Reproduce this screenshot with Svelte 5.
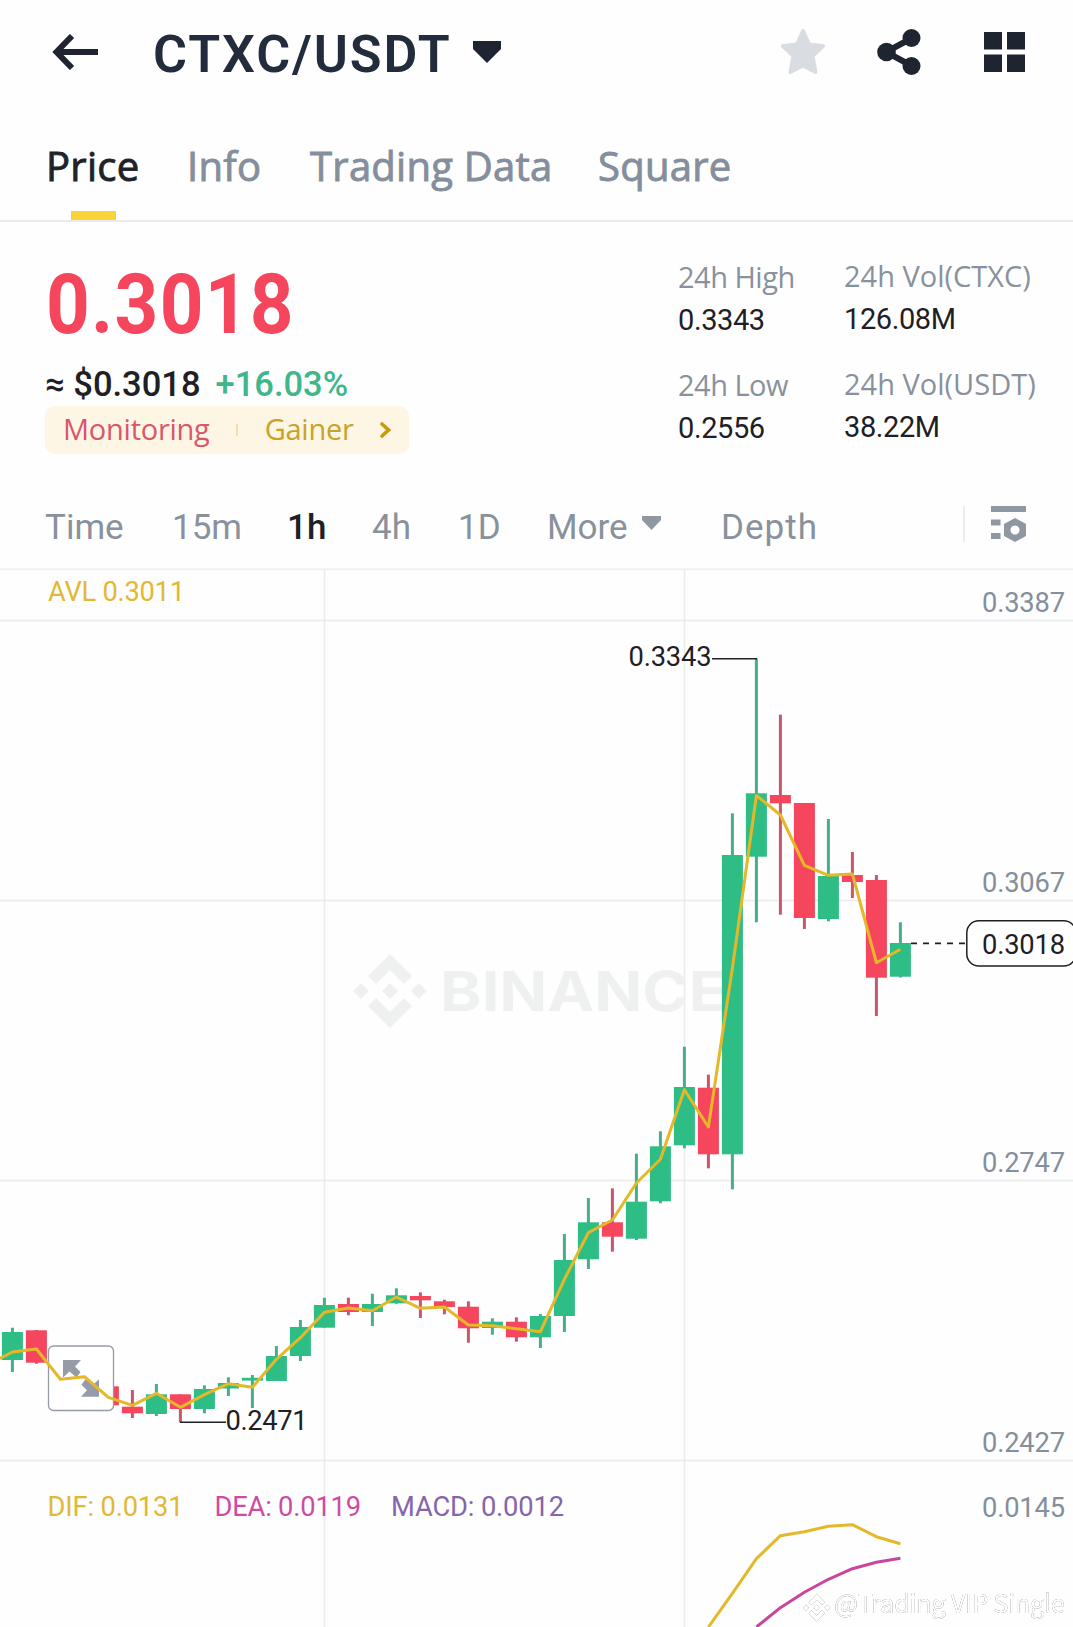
<script>
	const tabs = ["Price", "Info", "Trading Data", "Square"];
	let activeTab = $state("Price");

	const intervals = ["Time", "15m", "1h", "4h", "1D"];
	let activeInterval = $state("1h");

	const stats = [
		{ label: "24h High", value: "0.3343" },
		{ label: "24h Vol(CTXC)", value: "126.08M" },
		{ label: "24h Low", value: "0.2556" },
		{ label: "24h Vol(USDT)", value: "38.22M" }
	];

	// Candle geometry: [high, body top, body bottom, low, up]
	const candles = [
		[1327.7, 1332, 1360, 1372, 1],
		[1330, 1330.3, 1362.7, 1363.7, 0],
		[1358, 1362, 1378, 1382, 0],
		[1368, 1372, 1382, 1388, 1],
		[1386.3, 1386.3, 1405.3, 1405.3, 0],
		[1390, 1406.7, 1413.3, 1418, 0],
		[1384, 1394.3, 1414, 1416, 1],
		[1394.3, 1394.3, 1409, 1422.3, 0],
		[1385.3, 1389, 1409, 1413.3, 1],
		[1377.3, 1383, 1388.5, 1396, 1],
		[1375, 1377.8, 1380.6, 1408, 1],
		[1346, 1356, 1381, 1381, 1],
		[1320, 1327, 1356, 1361, 1],
		[1297.7, 1305, 1327.7, 1327.7, 1],
		[1297.7, 1304, 1312, 1315.3, 0],
		[1293.7, 1304, 1312, 1326, 1],
		[1288.3, 1295.3, 1303.3, 1303.7, 1],
		[1292.3, 1296, 1300.3, 1318, 0],
		[1299.7, 1301.3, 1307, 1314.3, 0],
		[1301.3, 1306.7, 1328.3, 1342.7, 0],
		[1318.3, 1321.7, 1328, 1334.7, 1],
		[1317.3, 1321.7, 1337.3, 1341.7, 0],
		[1314, 1316, 1337.3, 1348, 1],
		[1234, 1260, 1316, 1332, 1],
		[1198, 1222.3, 1259.3, 1269, 1],
		[1188.3, 1222.3, 1236.7, 1251.7, 0],
		[1153.7, 1201.7, 1238.7, 1240, 1],
		[1131.3, 1146.3, 1201.3, 1203.3, 1],
		[1046.7, 1087, 1145.3, 1148.3, 1],
		[1074.7, 1087.7, 1154.3, 1168.3, 0],
		[813.3, 855, 1154.3, 1189.3, 1],
		[658.7, 793.3, 856.7, 922.3, 1],
		[714.7, 795, 803.3, 914.7, 0],
		[803, 803, 918, 929, 0],
		[819, 876, 919, 921.3, 1],
		[852, 875, 882, 898, 0],
		[875, 880, 977.7, 1016, 0],
		[922.3, 943, 976.7, 977.5, 1]
	];

	const avl = [
		1352, 1349, 1379.3, 1376.7, 1397.3, 1405.3, 1393.3, 1407.3, 1394.7, 1383.7,
		1387.3, 1359.3, 1337.7, 1312.2, 1308, 1310.7, 1297, 1308.3, 1307, 1325,
		1325.7, 1328.7, 1331.7, 1279.3, 1232.7, 1220, 1183, 1159.3, 1089.7, 1127,
		968, 795.5, 815, 865.3, 875.3, 874, 962.7, 949.3
	];

	const dif = [1627, 1593.3, 1558.7, 1535.7, 1531.7, 1526.3, 1524.7, 1536.7, 1543.7];
	const dea = [1627, 1607.7, 1592.3, 1579.3, 1568.7, 1562.3, 1558.3];

	const cx = (i) => 12.4 + i * 24;
	const toPoints = (values, start) =>
		values.map((y, i) => `${cx(i + start)},${y}`).join(" ");

	const rows = [620.5, 900.5, 1180.5, 1460.5];
	const columns = [324.5, 684.5];
	const axis = [
		{ y: 611.5, text: "0.3387" },
		{ y: 891.7, text: "0.3067" },
		{ y: 1171.7, text: "0.2747" },
		{ y: 1451.7, text: "0.2427" },
		{ y: 1516.7, text: "0.0145" }
	];
</script>

{#snippet logo()}
	<path d="M37 0 59 22 51 30 37 16 23 30 15 22zM8 29 16 37 8 45 0 37zM37 29 45 37 37 45 29 37zM66 29 74 37 66 45 58 37zM23 44 37 58 51 44 59 52 37 74 15 52z" />
{/snippet}

<div class="screen">
	<header>
		<svg class="back" width="46" height="36" viewBox="0 0 46 36">
			<path d="M46 18H5M20 2 4.500 18 20 34" fill="none" stroke="#1e2530" stroke-width="6" />
		</svg>
		<h1>CTXC/USDT</h1>
		<svg class="pair-caret" width="28" height="22" viewBox="0 0 28 22">
			<path d="M0 0h28v8L14 22 0 8z" fill="#1e2530" />
		</svg>
		<div class="actions">
			<svg width="46" height="48" viewBox="0 0 46 48">
				<path d="M23 3 29 16.500 43 18 32.500 28 35.500 44 23 37.500 10.500 44 13.500 28 3 18 17 16.500z" fill="#d9dce1" stroke="#d9dce1" stroke-width="4" stroke-linejoin="round" />
			</svg>
			<svg width="44" height="48" viewBox="0 0 44 48">
				<path d="M35 10 9 24 35 38" fill="none" stroke="#1e2530" stroke-width="6" />
				<circle cx="9.500" cy="24" r="9.300" fill="#1e2530" />
				<circle cx="34.500" cy="10" r="9" fill="#1e2530" />
				<circle cx="34.500" cy="38" r="9" fill="#1e2530" />
			</svg>
			<svg width="41" height="40" viewBox="0 0 41 40">
				<path d="M0 0h18v17.500H0zM23 0h18v17.500H23zM0 22.500h18V40H0zM23 22.500h18V40H23z" fill="#1e2530" />
			</svg>
		</div>
	</header>

	<nav class="tabs">
		{#each tabs as tab}
			<button class:active={tab === activeTab} onclick={() => (activeTab = tab)}>{tab}</button>
		{/each}
	</nav>

	<section class="summary">
		<div class="quote">
			<div class="price">0.3018</div>
			<div class="sub"><span>≈ $0.3018</span><span class="up">+16.03%</span></div>
			<div class="tags">
				<span class="monitoring">Monitoring</span>
				<i></i>
				<span class="gainer">Gainer</span>
				<svg width="11" height="16" viewBox="0 0 11 16">
					<path d="M2 2 8.500 8 2 14" fill="none" stroke="#c99a10" stroke-width="3.600" stroke-linecap="round" />
				</svg>
			</div>
		</div>
		<dl class="stats">
			{#each stats as stat}
				<div>
					<dt>{stat.label}</dt>
					<dd>{stat.value}</dd>
				</div>
			{/each}
		</dl>
	</section>

	<div class="intervals">
		{#each intervals as item}
			<button class:active={item === activeInterval} onclick={() => (activeInterval = item)}>{item}</button>
		{/each}
		<button class="more">
			More
			<svg width="20" height="14" viewBox="0 0 20 14"><path d="M0 0h19v4L9.500 14 0 4z" fill="#8f97a3" /></svg>
		</button>
		<button class="depth">Depth</button>
		<div class="settings">
			<svg width="35" height="36" viewBox="0 0 35 36">
				<path d="M0 0h35v6H0zM0 13.500h9.500v6H0zM0 27h9.500v6H0z" fill="#8f97a3" />
				<path fill-rule="evenodd" d="M24 12 35 18V30L24 36 13 30V18zM24 19.500a4.500 4.500 0 1 0 .01 0z" fill="#8f97a3" />
			</svg>
		</div>
	</div>

	<svg class="chart" width="1073" height="1059" viewBox="0 568 1073 1059">
		<path d="M0 569.200H1073" stroke="#f0f1f1" stroke-width="2" />
		{#each rows as y}
			<path d="M0 {y}H1073" stroke="#eaebec" stroke-width="1.500" />
		{/each}
		{#each columns as x}
			<path d="M{x} 570V1627" stroke="#eaebec" stroke-width="1.500" />
		{/each}

		<g fill="#eff1f1">
			<g transform="translate(353 954)">{@render logo()}</g>
			<text class="brand" x="440" y="1011" textLength="287" lengthAdjust="spacingAndGlyphs">BINANCE</text>
		</g>

		{#each candles as [high, top, bottom, low, up], i}
			<rect class={up ? "wick-up" : "wick-down"} x={cx(i) - 1.5} y={high} width="3" height={low - high} />
			<rect class={up ? "body-up" : "body-down"} x={cx(i) - 10.5} y={top} width="21" height={bottom - top} />
		{/each}

		<!-- fullscreen toggle -->
		<rect x="48.500" y="1346" width="65" height="64.500" rx="5" fill="#fff" stroke="#959ca8" stroke-width="1.300" />
		<path d="M63 1360H81L75 1366.500 80.500 1372 76.500 1377.500 69.500 1371.500 63 1377.500zM99 1396.700H81L87 1390.200 81.500 1384.700 85.500 1379.200 92.500 1385.200 99 1379.200z" fill="#959ca8" />

		<polyline class="avl" points="0,1358.500 {toPoints(avl, 0)}" />

		<text class="avl-label" x="48" y="600.700" textLength="137">AVL 0.3011</text>
		{#each axis as label}
			<text class="axis" x="982" y={label.y} textLength="83">{label.text}</text>
		{/each}

		<path d="M712 658.700H757M180 1422.300H226" stroke="#1e2026" stroke-width="1.600" />
		<text class="mark" x="628.500" y="665.700" textLength="83">0.3343</text>
		<text class="mark" x="225.500" y="1429.700" textLength="82">0.2471</text>

		<path d="M911 943.300H967" stroke="#1e2026" stroke-width="1.700" stroke-dasharray="6 6" />
		<rect x="966.800" y="920.700" width="109" height="45.300" rx="12" fill="#fff" stroke="#1e2026" stroke-width="1.500" />
		<text class="mark" x="982" y="954" textLength="83">0.3018</text>

		<text x="47.500" y="1515.500" fill="#e2b832" textLength="136">DIF: 0.0131</text>
		<text x="214.500" y="1515.500" fill="#cf4aa5" textLength="146.500">DEA: 0.0119</text>
		<text x="391" y="1515.500" fill="#8565ab" textLength="173">MACD: 0.0012</text>
		<polyline class="dif" points={toPoints(dif, 29)} />
		<polyline class="dea" points={toPoints(dea, 31)} />

		<g class="credit">
			<g transform="translate(803 1594) scale(.37)">{@render logo()}</g>
			<text x="834" y="1613" textLength="231">@Trading VIP Single</text>
		</g>
	</svg>
</div>

<style>
	:global(body) {
		background: #fefefe;
	}

	.screen {
		width: 1073px;
		height: 1627px;
		overflow: hidden;
		font-family: Roboto, sans-serif;
		color: #1e2026;
	}

	svg {
		display: block;
		flex: none;
	}

	button {
		padding: 0;
		border: 0;
		background: none;
		font: inherit;
		color: inherit;
		letter-spacing: inherit;
		text-align: left;
		white-space: nowrap;
		cursor: pointer;
	}

	header {
		display: flex;
		align-items: center;
		height: 104px;
		padding: 0 48px 0 52px;
	}

	h1 {
		width: 320px;
		margin: 5px 0 0 55px;
		font-size: 52px;
		line-height: 60px;
		font-weight: 600;
		letter-spacing: 1.9px;
		color: #222c3c;
	}

	.actions {
		display: flex;
		align-items: center;
		margin-left: auto;
	}

	.actions svg + svg {
		margin-left: 51px;
	}

	.actions svg:last-child {
		margin-left: 63px;
	}

	.tabs {
		display: grid;
		grid-template-columns: 141px 123px 288px auto;
		height: 116px;
		padding-left: 46px;
		border-bottom: 2px solid #ebebeb;
		font-family: "Open Sans", sans-serif;
		font-size: 40px;
		letter-spacing: 0.25px;
		color: #848e9c;
	}

	.tabs button {
		position: relative;
		padding-top: 6px;
		-webkit-text-stroke: 0.9px currentColor;
	}

	.tabs .active {
		color: #1e2329;
	}

	.tabs .active::after {
		content: "";
		position: absolute;
		left: 25px;
		bottom: 0;
		width: 45px;
		height: 9px;
		background: #f8d33a;
	}

	.summary {
		display: flex;
		height: 258px;
		box-sizing: border-box;
		padding: 36px 0 0 45px;
	}

	.quote {
		width: 633px;
	}

	/* condensed digits */
	.price {
		margin: 2px 0 -2px 1px;
		font-size: 83px;
		line-height: 90px;
		font-weight: 700;
		letter-spacing: 1.4px;
		transform: scaleX(0.92);
		transform-origin: left;
		color: #f6465d;
	}

	.sub {
		display: flex;
		gap: 15px;
		height: 59px;
		margin-bottom: -1px;
		align-items: flex-end;
		font-size: 34.5px;
		line-height: 46px;
		font-weight: 500;
	}

	.up {
		color: #3fb68b;
	}

	.tags {
		display: flex;
		align-items: center;
		box-sizing: border-box;
		width: 364px;
		height: 48px;
		padding: 0 18px;
		border-radius: 10px;
		background: #fdf6e4;
		font-family: "Open Sans", sans-serif;
		font-size: 29px;
		letter-spacing: -0.25px;
		line-height: 40px;
	}

	.tags span {
		margin-top: -2px;
	}

	.tags i {
		width: 2px;
		height: 12px;
		margin: 0 27px 0 26px;
		background: #f3dfab;
	}

	.monitoring {
		color: #d9566b;
	}

	.gainer {
		color: #c9a227;
	}

	.tags svg {
		margin-left: auto;
	}

	.stats {
		display: grid;
		grid-template-columns: 166px auto;
		grid-auto-rows: 108px;
		margin: 0;
		font-size: 29px;
	}

	.stats div {
		margin-top: -1px;
	}

	.stats div:nth-child(even) {
		margin-top: -2px;
	}

	dt {
		font-family: "Open Sans", sans-serif;
		line-height: 40px;
		color: #89919d;
		white-space: nowrap;
	}

	.stats div:nth-child(odd) dt {
		letter-spacing: -0.5px;
	}

	dd {
		margin: 0;
		line-height: 46px;
		letter-spacing: -0.4px;
	}

	.intervals {
		display: grid;
		grid-template-columns: 127px 115px 85px 86px 88px 174px 242px auto;
		height: 88px;
		padding-left: 45px;
		font-size: 35px;
		line-height: 96px;
		color: #89919d;
	}

	.intervals .active {
		font-weight: 500;
		color: #1e2026;
	}

	.intervals .more {
		display: flex;
		gap: 14px;
		margin-left: 1px;
	}

	.intervals .depth {
		margin-left: 1px;
		letter-spacing: 1px;
	}

	.more svg {
		margin-top: 36px;
	}

	.settings {
		height: 36px;
		margin: 26px 0 0 1px;
		padding-left: 26px;
		border-left: 2px solid #ececee;
	}

	.chart text {
		font-size: 27.3px;
	}

	.chart .brand {
		font-family: Inter, sans-serif;
		font-size: 55px;
		font-weight: 700;
	}

	.axis {
		fill: #848e9c;
	}

	.mark {
		fill: #1e2026;
	}

	.avl-label {
		fill: #e2b832;
	}

	.wick-up {
		fill: #45b088;
	}

	.wick-down {
		fill: #cb566b;
	}

	.body-up {
		fill: #2ebd85;
	}

	.body-down {
		fill: #f6465d;
	}

	polyline {
		fill: none;
		stroke-width: 3;
		stroke-linejoin: round;
	}

	.avl,
	.dif {
		stroke: #e4b828;
	}

	.dea {
		stroke: #c9469f;
	}

	.credit {
		fill: #fff;
		filter: drop-shadow(0.8px 0.8px 0.5px #555);
	}

	.chart .credit text {
		font-family: "Noto Sans CJK SC", sans-serif;
		font-size: 25.5px;
	}
</style>
